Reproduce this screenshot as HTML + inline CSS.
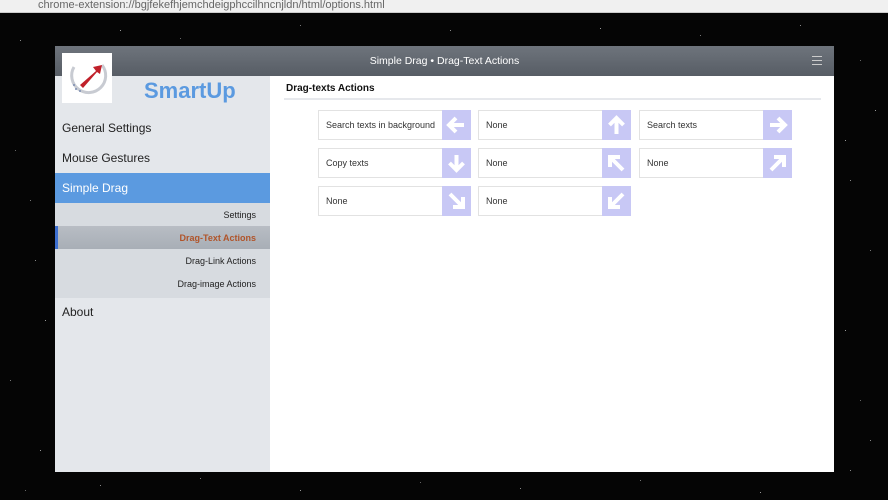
<!DOCTYPE html>
<html><head><style>
*{margin:0;padding:0;box-sizing:border-box}
body{width:888px;height:500px;overflow:hidden;background:#050505;font-family:"Liberation Sans",Arial,sans-serif;position:relative}
.stars{position:absolute;left:0;top:0;width:1px;height:1px;background:transparent;box-shadow:20px 40px #888,70px 60px #777,120px 30px #999,15px 150px #666,35px 260px #888,10px 380px #777,40px 450px #999,25px 490px #666,100px 485px #888,200px 478px #777,300px 490px #999,420px 482px #666,520px 488px #888,640px 480px #777,760px 492px #999,850px 470px #888,860px 400px #666,845px 330px #999,870px 250px #777,850px 180px #888,875px 110px #999,860px 60px #666,300px 25px #777,450px 30px #888,600px 28px #999,700px 35px #777,180px 38px #666,800px 25px #888,45px 320px #999,30px 200px #777,870px 440px #888,845px 140px #999;}
.url{position:absolute;left:0;top:0;width:888px;height:13px;background:#f0f0f0;border-bottom:1px solid #ccc;font-size:11px;color:#666;line-height:10px;padding-left:38px;overflow:hidden}
.panel{position:absolute;left:55px;top:46px;width:779px;height:426px;background:#fff}
.hdr{position:absolute;left:0;top:0;width:779px;height:30px;background:linear-gradient(#6e747c,#575d65);color:#fff;font-size:10.5px;text-align:center;line-height:30px}
.menu{position:absolute;right:12px;top:10px;width:10px}
.menu i{display:block;height:1px;background:#ccc;margin-bottom:3px}
.side{position:absolute;left:0;top:30px;width:215px;height:396px;background:#e4e7eb}
.logo{position:absolute;left:7px;top:7px;width:50px;height:50px;background:#fff;z-index:2}
.brand{position:absolute;left:89px;top:2px;font-size:22px;font-weight:bold;color:#5b9ae0}
.it{position:absolute;left:0;width:215px;height:30px;line-height:30px;padding-left:7px;font-size:12px;color:#222}
.sub{position:absolute;left:0;top:127px;width:215px;height:95px;background:#d7dbe0}
.si{position:absolute;left:0;width:215px;height:23px;line-height:25px;text-align:right;padding-right:14px;font-size:9px;color:#222}
.main h1{position:absolute;left:231px;top:37px;font-size:10px;font-weight:bold;color:#111}
.line{position:absolute;left:229px;top:52px;width:537px;height:2px;background:#e6e8ec}
.box{position:absolute;width:153px;height:30px;border:1px solid #e2e2e2;background:#fff;font-size:9px;color:#333;line-height:29px;padding-left:7px}
.ic{position:absolute;right:-1px;top:-1px;width:29px;height:30px;background:#c8c8f5}
.ic svg{width:29px;height:30px}
</style></head><body>
<div class="stars"></div>
<div class="url">chrome-extension://bgjfekefhjemchdeigphccilhncnjldn/html/options.html</div>
<div class="panel">
<div class="hdr">Simple Drag • Drag-Text Actions<div class="menu"><i></i><i></i><i></i></div></div>
<div class="side">
<div class="brand">SmartUp</div>
<div class="it" style="top:37px">General Settings</div>
<div class="it" style="top:67px">Mouse Gestures</div>
<div class="it" style="top:97px;background:#5b9ae0;color:#fff">Simple Drag</div>
<div class="sub">
<div class="si" style="top:0">Settings</div>
<div class="si" style="top:23px;background:linear-gradient(#b8bdc4,#a8aeb6);border-left:3px solid #3d6fd0;color:#b0542a;font-weight:bold">Drag-Text Actions</div>
<div class="si" style="top:46px">Drag-Link Actions</div>
<div class="si" style="top:69px">Drag-image Actions</div>
</div>
<div class="it" style="top:221px">About</div>
</div>
<div class="logo"><svg width="50" height="50" viewBox="0 0 50 50"><path d="M12 14 A17 17 0 1 0 40 12" fill="none" stroke="#c8cbd2" stroke-width="3"/><path d="M18 32 L34 18 L31 14 L40 12 L38 21 L35 19 L21 35 Z" fill="#c0202a"/><circle cx="14" cy="36" r="1" fill="#7a8cb0"/><circle cx="18" cy="38" r="1" fill="#7a8cb0"/><circle cx="12" cy="32" r="1" fill="#7a8cb0"/></svg></div>
<div class="main">
<h1>Drag-texts Actions</h1><div class="line"></div>
</div>
</div>
<div class="box" style="left:318px;top:110px">Search texts in background<div class="ic"><svg viewBox="0 0 29 30"><path d="M22 15H8M14 8L7 15L14 22" stroke="#fff" stroke-width="4" fill="none"/></svg></div></div>
<div class="box" style="left:478px;top:110px">None<div class="ic"><svg viewBox="0 0 29 30"><path d="M14.5 24V9M7.5 15L14.5 8L21.5 15" stroke="#fff" stroke-width="4" fill="none"/></svg></div></div>
<div class="box" style="left:639px;top:110px">Search texts<div class="ic"><svg viewBox="0 0 29 30"><path d="M7 15H21M15 8L22 15L15 22" stroke="#fff" stroke-width="4" fill="none"/></svg></div></div>
<div class="box" style="left:318px;top:148px">Copy texts<div class="ic"><svg viewBox="0 0 29 30"><path d="M14.5 7V21M7.5 15L14.5 22L21.5 15" stroke="#fff" stroke-width="4" fill="none"/></svg></div></div>
<div class="box" style="left:478px;top:148px">None<div class="ic"><svg viewBox="0 0 29 30"><path d="M21 22L9 10M8 19V9H18" stroke="#fff" stroke-width="4" fill="none"/></svg></div></div>
<div class="box" style="left:639px;top:148px">None<div class="ic"><svg viewBox="0 0 29 30"><path d="M8 22L20 10M11 9H21V19" stroke="#fff" stroke-width="4" fill="none"/></svg></div></div>
<div class="box" style="left:318px;top:186px">None<div class="ic"><svg viewBox="0 0 29 30"><path d="M8 8L20 20M21 11V21H11" stroke="#fff" stroke-width="4" fill="none"/></svg></div></div>
<div class="box" style="left:478px;top:186px">None<div class="ic"><svg viewBox="0 0 29 30"><path d="M21 8L9 20M8 11V21H18" stroke="#fff" stroke-width="4" fill="none"/></svg></div></div>
</body></html>
